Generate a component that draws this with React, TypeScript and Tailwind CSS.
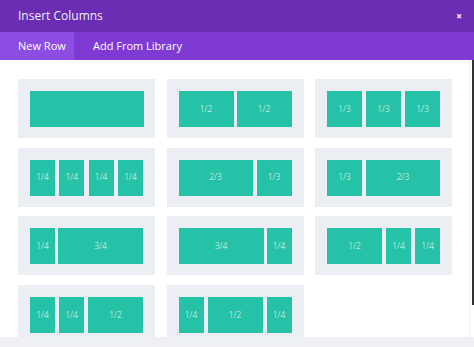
import React from "react";

type Col = { label: string; w: number };

const W: Record<string, number> = { "1/4": 25, "1/3": 35, "1/2": 55, "2/3": 74, "3/4": 85, full: 114 };

const mk = (...labels: string[]): Col[] =>
  labels.map((l) => ({ label: l === "full" ? "" : l, w: W[l] }));

const layouts: Col[][] = [
  mk("full"),
  mk("1/2", "1/2"),
  mk("1/3", "1/3", "1/3"),
  mk("1/4", "1/4", "1/4", "1/4"),
  mk("2/3", "1/3"),
  mk("1/3", "2/3"),
  mk("1/4", "3/4"),
  mk("3/4", "1/4"),
  mk("1/2", "1/4", "1/4"),
  mk("1/4", "1/4", "1/2"),
  mk("1/4", "1/2", "1/4"),
];

export default function App() {
  return (
    <div
      className="w-[474px] h-[347px] overflow-hidden bg-white flex flex-col"
      style={{ fontFamily: '"Open Sans", "Noto Sans", sans-serif' }}
    >
      <div className="h-[32px] shrink-0 bg-[#6a2db4] flex items-center justify-between pl-[18px] pr-[12px]">
        <span className="text-white/95 text-[12px] leading-none">Insert Columns</span>
        <span className="text-white text-[10px] font-bold leading-none">×</span>
      </div>
      <div className="h-[28px] shrink-0 bg-[#7e3ad2] flex text-white text-[11px] font-medium">
        <div className="w-[74px] bg-[#8d4de2] flex items-center pl-[18px]">New Row</div>
        <div className="flex items-center pl-[19px]">Add From Library</div>
      </div>
      <div className="relative h-[277px] shrink-0 overflow-hidden">
        <div className="grid grid-cols-[137px_137px_137px] gap-x-[11.5px] gap-y-[9.7px] pl-[18px] pt-[19px]">
          {layouts.map((cols, i) => (
            <div
              key={i}
              className="h-[59px] bg-[#ebeef2] flex items-center justify-between px-[12px] pt-[1px]"
            >
              {cols.map((c, j) => (
                <div
                  key={j}
                  className="h-[36px] shrink-0 bg-[#25c2a7] flex items-center justify-center text-white/90 text-[8.5px] font-light"
                  style={{ width: c.w }}
                >
                  {c.label}
                </div>
              ))}
            </div>
          ))}
        </div>
        <div className="absolute right-[4px] top-0 bottom-0 w-px bg-[#eceef1]" />
        <div className="absolute right-0 top-0 h-[245px] w-[2px] bg-[#2f3133]" />
      </div>
      <div className="flex-1 bg-[#eef0f4]" />
    </div>
  );
}
